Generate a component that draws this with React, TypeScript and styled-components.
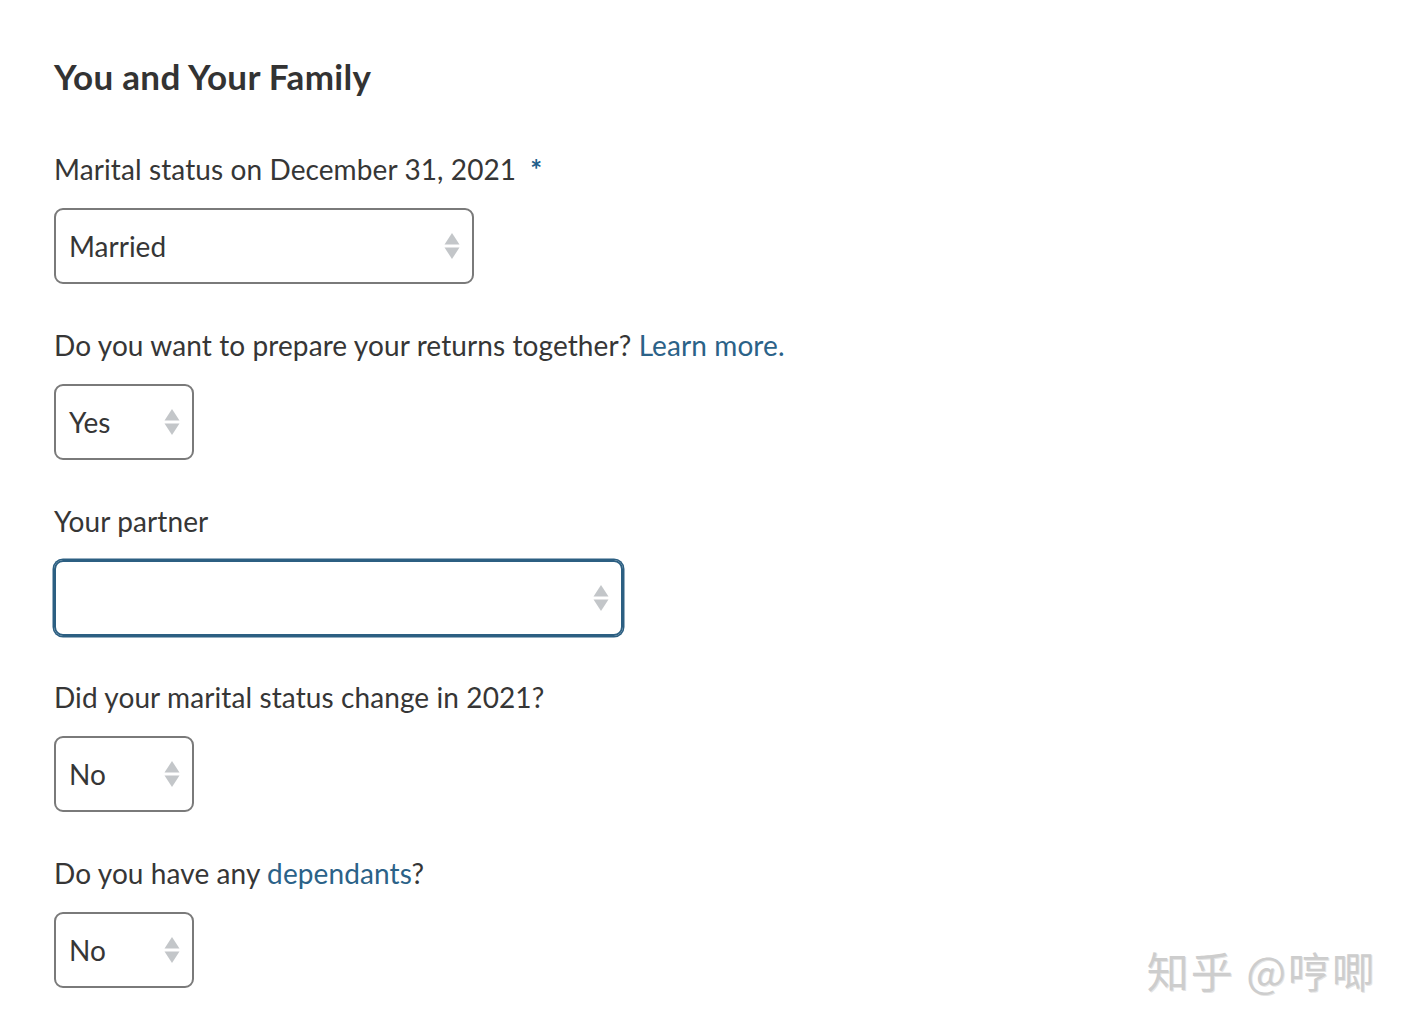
import React from 'react';
import styled, { createGlobalStyle } from 'styled-components';

const GlobalStyle = createGlobalStyle`
  html, body {
    margin: 0;
    padding: 0;
    background: #ffffff;
  }
  body {
    font-family: Lato, "Liberation Sans", sans-serif;
    color: #333333;
  }
`;

const Page = styled.div`
  position: relative;
  width: 1412px;
  height: 1032px;
  overflow: hidden;
  padding: 56px 0 0 54px;
  box-sizing: border-box;
`;

const Heading = styled.h2`
  margin: 0 0 55px 0;
  font-size: 35px;
  line-height: 40px;
  font-weight: 700;
  letter-spacing: 0.3px;
  color: #333333;
`;

const Form = styled.div`
  display: flex;
  flex-direction: column;
  gap: 43px;
`;

const Field = styled.div`
  display: flex;
  flex-direction: column;
  gap: 21px;
`;

const Label = styled.div`
  font-size: 28px;
  line-height: 36px;
  color: #363636;
  white-space: nowrap;
  letter-spacing: 0.1px;
`;

const Link = styled.a`
  color: #2b6288;
  text-decoration: none;
`;

const Required = styled.span`
  color: #1f5f8b;
  font-weight: 700;
  margin-left: 14px;
`;

const SelectBox = styled.div<{ width: number; focused?: boolean }>`
  width: ${(p) => p.width}px;
  height: 76px;
  box-sizing: border-box;
  display: flex;
  align-items: center;
  justify-content: space-between;
  padding: 0 12px 0 13px;
  border-radius: 9px;
  border: 2px solid ${(p) => (p.focused ? '#2c5f82' : '#7a7a7a')};
  box-shadow: ${(p) => (p.focused ? '0 0 0 1.5px #2c5f82' : 'none')};
  font-size: 28px;
  color: #363636;
`;

const Arrows = styled.svg`
  flex: none;
  width: 16px;
  height: 28px;
`;

const Watermark = styled.div`
  position: absolute;
  right: 36px;
  bottom: 32px;
  font-family: "Noto Sans CJK SC", sans-serif;
  font-size: 42px;
  letter-spacing: 2px;
  color: #cdcdcd;
  text-shadow: 1px 1px 0 #e4e4e4;
`;

function UpDown() {
  return (
    <Arrows viewBox="0 0 16 28">
      <path d="M8 1 L15.5 12.5 L0.5 12.5 Z" fill="#c3c6c9" />
      <path d="M0.5 15.5 L15.5 15.5 L8 27 Z" fill="#c3c6c9" />
    </Arrows>
  );
}

function Select({ value, width, focused }: { value: string; width: number; focused?: boolean }) {
  return (
    <SelectBox width={width} focused={focused}>
      <span>{value}</span>
      <UpDown />
    </SelectBox>
  );
}

export default function App() {
  return (
    <Page>
      <GlobalStyle />
      <Heading>You and Your Family</Heading>
      <Form>
        <Field>
          <Label>
            Marital status on December 31, 2021<Required>*</Required>
          </Label>
          <Select value="Married" width={420} />
        </Field>
        <Field>
          <Label>
            Do you want to prepare your returns together? <Link href="#">Learn more.</Link>
          </Label>
          <Select value="Yes" width={140} />
        </Field>
        <Field>
          <Label>Your partner</Label>
          <Select value="" width={569} focused />
        </Field>
        <Field>
          <Label>Did your marital status change in 2021?</Label>
          <Select value="No" width={140} />
        </Field>
        <Field>
          <Label>
            Do you have any <Link href="#">dependants</Link>?
          </Label>
          <Select value="No" width={140} />
        </Field>
      </Form>
      <Watermark>知乎 @哼唧</Watermark>
    </Page>
  );
}
